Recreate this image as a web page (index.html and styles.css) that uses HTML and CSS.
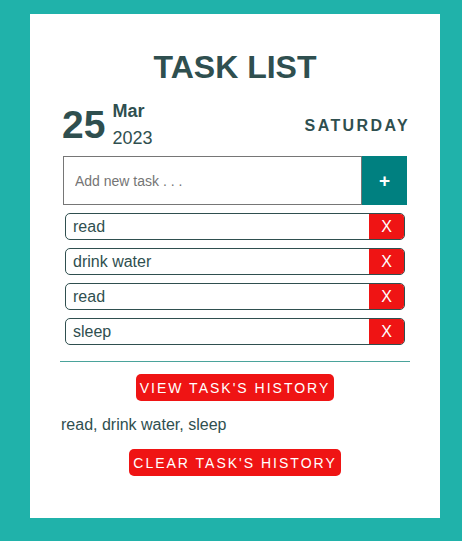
FILE: index.html
```html
<!DOCTYPE html>
<html lang="en">
<head>
  <meta charset="UTF-8">
  <meta name="viewport" content="width=device-width, initial-scale=1.0">
  <title>Task List</title>
  <link rel="stylesheet" href="styles.css">
</head>
<body>

  <div class="card">
    <h1 class="title">TASK LIST</h1>

    <div class="date-row">
      <div class="day">25</div>
      <div class="month-year">
        <span class="month">Mar</span>
        <span class="year">2023</span>
      </div>
      <div class="weekday">SATURDAY</div>
    </div>

    <form class="task-form" onsubmit="return false">
      <input type="text" class="task-input" placeholder="Add new task . . .">
      <button type="submit" class="add-btn">+</button>
    </form>

    <ul class="task-list">
      <li class="task"><span class="task-name">read</span><button class="remove-btn">X</button></li>
      <li class="task"><span class="task-name">drink water</span><button class="remove-btn">X</button></li>
      <li class="task"><span class="task-name">read</span><button class="remove-btn">X</button></li>
      <li class="task"><span class="task-name">sleep</span><button class="remove-btn">X</button></li>
    </ul>

    <hr class="divider">

    <button class="history-btn view-btn">VIEW TASK'S HISTORY</button>
    <p class="history">read, drink water, sleep</p>
    <button class="history-btn clear-btn">CLEAR TASK'S HISTORY</button>
  </div>

</body>
</html>
```

FILE: styles.css
```css
body {
  margin: 0;
  background: #20b2aa;
  font-family: 'Liberation Sans', Arial, sans-serif;
  color: #2f4f4f;
  height: 541px;
  overflow: hidden;
}

.card {
  box-sizing: border-box;
  width: 410px;
  height: 504px;
  margin: 14px 0 0 30px;
  padding: 0 30px;
  background: #fff;
  display: flex;
  flex-direction: column;
}

.title {
  margin: 35px 0 0;
  font-size: 32px;
  line-height: 36px;
  text-align: center;
}

/* date */
.date-row {
  display: flex;
  align-items: flex-start;
  margin-top: 13px;
  padding-left: 2px;
}

.day {
  margin-top: 7px;
  font-size: 39px;
  line-height: 40px;
  font-weight: bold;
}

.month-year {
  display: flex;
  flex-direction: column;
  margin-left: 7px;
  font-size: 18px;
  line-height: 27px;
}

.month {
  font-weight: bold;
}

.weekday {
  margin: 19px 0 0 auto;
  font-size: 16px;
  line-height: 18px;
  font-weight: bold;
  letter-spacing: 2.4px;
}

/* form */
.task-form {
  display: flex;
  margin: 4px 3px 0;
  height: 49px;
}

.task-input {
  flex: 1;
  box-sizing: border-box;
  height: 49px;
  margin: 0;
  padding: 0 11px;
  border: 1px solid #767676;
  font-family: inherit;
  font-size: 14px;
  outline: none;
}

.task-input::placeholder {
  color: #757575;
}

.add-btn {
  width: 45px;
  height: 49px;
  border: none;
  background: #008080;
  color: #fff;
  font-family: inherit;
  font-size: 19px;
  font-weight: bold;
  padding: 0;
}

/* tasks */
.task-list {
  list-style: none;
  margin: 8px 5px 0;
  padding: 0;
  display: flex;
  flex-direction: column;
  gap: 8px;
}

.task {
  display: flex;
  align-items: stretch;
  height: 27px;
  box-sizing: border-box;
  border: 1px solid #2f4f4f;
  border-radius: 5px;
  overflow: hidden;
}

.task-name {
  flex: 1;
  padding-left: 7px;
  font-size: 16px;
  line-height: 25px;
}

.remove-btn {
  width: 35px;
  border: none;
  padding: 0;
  background: #ef1414;
  color: #fff;
  font-family: inherit;
  font-size: 16px;
}

.divider {
  width: 100%;
  margin: 16px 0 0;
  border: none;
  border-top: 1px solid #4aa39b;
}

/* history */
.history-btn {
  align-self: center;
  height: 27px;
  padding: 0 4px;
  border: none;
  border-radius: 5px;
  background: #ef1414;
  color: #fff;
  font-family: inherit;
  font-size: 14px;
  letter-spacing: 2px;
}

.view-btn {
  margin-top: 12px;
}

.history {
  margin: 15px 0 0 1px;
  font-size: 16px;
  line-height: 18px;
}

.clear-btn {
  margin-top: 15px;
}
```
